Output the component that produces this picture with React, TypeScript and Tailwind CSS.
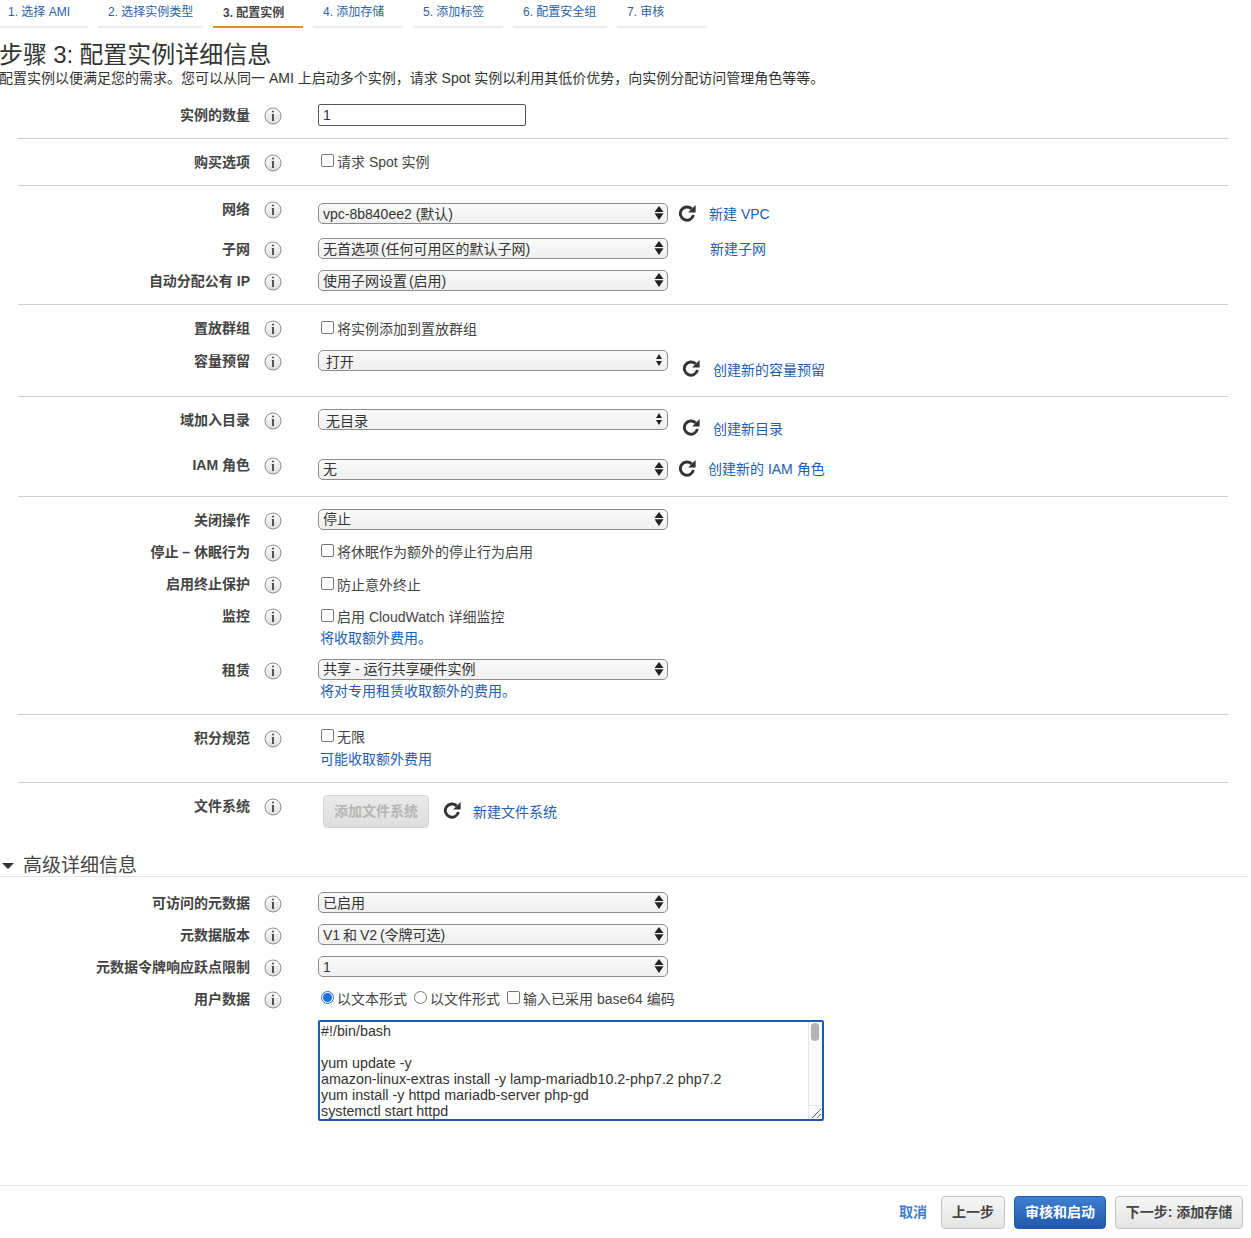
import React from "react";

const Info = () => (
  <svg width="18" height="18" viewBox="0 0 18 18" className="block">
    <defs>
      <linearGradient id="ig" x1="0" y1="0" x2="0" y2="1">
        <stop offset="0" stopColor="#ffffff" />
        <stop offset="1" stopColor="#dcdcdc" />
      </linearGradient>
    </defs>
    <circle cx="9" cy="9" r="8" fill="url(#ig)" stroke="#8f8f8f" strokeWidth="1" />
    <rect x="8" y="3.6" width="2" height="2" rx="1" fill="#444" />
    <path d="M7.8 7h2.1v7H8.1V8h-.3z" fill="#444" />
  </svg>
);

const Arrows = ({ cls = "", narrow = false }: { cls?: string; narrow?: boolean }) => (
  <svg width="10" height="14" viewBox="0 0 10 14" className={`block shrink-0 ${cls}`}>
    {narrow ? (
      <>
        <path d="M5 1L8 6H2z" fill="#222" />
        <path d="M5 13L8 8H2z" fill="#222" />
      </>
    ) : (
      <>
        <path d="M5 0L9.5 6H.5z" fill="#222" />
        <path d="M5 14L9.5 7.2H.5z" fill="#222" />
      </>
    )}
  </svg>
);

const Select = ({ text, tc = "pl-[4px] pt-px", narrow = false }: { text: string; tc?: string; narrow?: boolean }) => (
  <div className="flex h-[21px] w-[350px] items-center justify-between rounded-[5px] border border-[#8c8c8c] bg-gradient-to-b from-[#fafafa] to-[#f0f0f0] pr-[3px] text-[14px] leading-[21px] text-[#333]">
    <span className={tc}>{text}</span>
    <Arrows cls="mb-[2px]" narrow={narrow} />
  </div>
);

const Check = ({ children }: { children: React.ReactNode }) => (
  <div className="flex items-center text-[14px] leading-[20px] text-[#444]">
    <span className="mb-[3px] ml-[3px] mr-[3px] block h-[13px] w-[13px] rounded-[2px] border border-[#767676] bg-white" />
    {children}
  </div>
);

const A = ({ children, cls = "" }: { children: React.ReactNode; cls?: string }) => (
  <span className={`text-[14px] leading-[20px] text-[#2360b0] ${cls}`}>{children}</span>
);

const Row = ({
  label, h, lab, ico, ctl, children,
}: { label: string; h: string; lab: string; ico: string; ctl: string; children?: React.ReactNode }) => (
  <div className={`flex items-start ${h}`}>
    <div className={`w-[250px] shrink-0 text-right text-[14px] font-bold leading-[20px] text-[#444] ${lab}`}>{label}</div>
    <div className={`ml-[14px] w-[54px] shrink-0 ${ico}`}><Info /></div>
    <div className={`min-w-0 flex-1 ${ctl}`}>{children}</div>
  </div>
);

const Hr = () => <div className="ml-[18px] mr-[20px] h-px bg-[#cfcfcf]" />;

const Tab = ({ text, w, on, mr = "mr-[10px]", pl = "pl-[10px]" }: { text: string; w: string; on?: boolean; mr?: string; pl?: string }) => (
  <div className={`h-[28px] border-b-[2px] ${w} ${mr} ${pl} text-[12px] ${on ? "border-[#e8892b] font-bold leading-[26px] text-[#444]" : "border-[#ebebeb] leading-[25px] text-[#2a62a8]"}`}>
    {text}
  </div>
);

const Refresh = ({ cls }: { cls: string }) => (
  <svg width="18" height="18" viewBox="0 0 18 18" className={`shrink-0 ${cls}`}>
    <path d="M13.6 4.9A6.6 6.6 0 1 0 15.4 11" stroke="#333" strokeWidth="2.9" fill="none" />
    <path d="M17.6 1v7.4h-7.4z" fill="#333" />
  </svg>
);

const Btn = ({ children, cls }: { children: React.ReactNode; cls: string }) => (
  <div className={`flex h-[33px] items-center justify-center rounded-[4px] border text-[14px] font-bold ${cls}`}>{children}</div>
);

export default function App() {
  return (
    <div className="h-[1238px] w-[1248px] overflow-hidden bg-white font-['Liberation_Sans','Noto_Sans_CJK_SC',sans-serif]">
      <div className="flex">
        <Tab text="1. 选择 AMI" w="w-[88px]" pl="pl-[8px]" />
        <Tab text="2. 选择实例类型" w="w-[105px]" />
        <Tab text="3. 配置实例" w="w-[90px]" on />
        <Tab text="4. 添加存储" w="w-[90px]" />
        <Tab text="5. 添加标签" w="w-[90px]" />
        <Tab text="6. 配置安全组" w="w-[94px]" />
        <Tab text="7. 审核" w="w-[90px]" />
      </div>
      <h1 className="-ml-px mt-[11px] h-[31px] text-[24px] font-normal leading-[32px] text-[#333] [word-spacing:-0.5px]">步骤 3: 配置实例详细信息</h1>
      <p className="-ml-px h-[22px] text-[14px] leading-[16px] text-[#333]">配置实例以便满足您的需求。您可以从同一 AMI 上启动多个实例，请求 Spot 实例以利用其低价优势，向实例分配访问管理角色等等。</p>

      <Row label="实例的数量" h="h-[46px]" lab="mt-[13px]" ico="mt-[15px]" ctl="mt-[12px]">
        <div className="h-[22px] w-[208px] rounded-[2px] border border-[#555] pl-[4px] text-[14px] leading-[20px] text-[#333]">1</div>
      </Row>
      <Hr />
      <Row label="购买选项" h="h-[46px]" lab="mt-[13px]" ico="mt-[15px]" ctl="mt-[13px]">
        <Check>请求 Spot 实例</Check>
      </Row>
      <Hr />
      <Row label="网络" h="h-[45px]" lab="mt-[13px]" ico="mt-[15px]" ctl="mt-[17px]">
        <div className="flex items-start">
          <Select text="vpc-8b840ee2 (默认)" />
          <Refresh cls="ml-[10px] mt-px" />
          <A cls="ml-[13px] mt-px">新建 VPC</A>
        </div>
      </Row>
      <Row label="子网" h="h-[32px]" lab="mt-[8px]" ico="mt-[10px]" ctl="mt-[7px]">
        <div className="flex items-start">
          <Select text="无首选项 (任何可用区的默认子网)" tc="pl-[4px] pt-px [word-spacing:-2px]" />
          <A cls="ml-[42px] mt-px">新建子网</A>
        </div>
      </Row>
      <Row label="自动分配公有 IP" h="h-[41px]" lab="mt-[8px]" ico="mt-[10px]" ctl="mt-[7px]">
        <Select text="使用子网设置 (启用)" tc="pl-[4px] pt-px [word-spacing:-2px]" />
      </Row>
      <Hr />
      <Row label="置放群组" h="h-[34px]" lab="mt-[13px]" ico="mt-[15px]" ctl="mt-[14px]">
        <Check>将实例添加到置放群组</Check>
      </Row>
      <Row label="容量预留" h="h-[57px]" lab="mt-[12px]" ico="mt-[14px]" ctl="mt-[11px]">
        <div className="flex items-start">
          <Select text="打开" tc="pl-[7px] pt-[3px]" narrow />
          <Refresh cls="ml-[14px] mt-[9px]" />
          <A cls="ml-[13px] mt-[10px]">创建新的容量预留</A>
        </div>
      </Row>
      <Hr />
      <Row label="域加入目录" h="h-[50px]" lab="mt-[13px]" ico="mt-[15px]" ctl="mt-[12px]">
        <div className="flex items-start">
          <Select text="无目录" tc="pl-[7px] pt-[3px]" narrow />
          <Refresh cls="ml-[14px] mt-[9px]" />
          <A cls="ml-[13px] mt-[10px]">创建新目录</A>
        </div>
      </Row>
      <Row label="IAM 角色" h="h-[49px]" lab="mt-[8px]" ico="mt-[10px]" ctl="mt-[12px]">
        <div className="flex items-start">
          <Select text="无" tc="pl-[4px]" />
          <Refresh cls="ml-[10px]" />
          <A cls="ml-[12px]">创建新的 IAM 角色</A>
        </div>
      </Row>
      <Hr />
      <Row label="关闭操作" h="h-[35px]" lab="mt-[13px]" ico="mt-[15px]" ctl="mt-[12px]">
        <Select text="停止" tc="pl-[4px]" />
      </Row>
      <Row label="停止 – 休眠行为" h="h-[32px]" lab="mt-[10px]" ico="mt-[12px]" ctl="mt-[10px]">
        <Check>将休眠作为额外的停止行为启用</Check>
      </Row>
      <Row label="启用终止保护" h="h-[32px]" lab="mt-[10px]" ico="mt-[12px]" ctl="mt-[11px]">
        <Check>防止意外终止</Check>
      </Row>
      <Row label="监控" h="h-[52px]" lab="mt-[10px]" ico="mt-[12px]" ctl="mt-[11px]">
        <Check>启用 CloudWatch 详细监控</Check>
        <div className="ml-[2px] mt-px"><A cls="block">将收取额外费用。</A></div>
      </Row>
      <Row label="租赁" h="h-[66px]" lab="mt-[12px]" ico="mt-[14px]" ctl="mt-[11px]">
        <Select text="共享 - 运行共享硬件实例" tc="pl-[4px]" />
        <div className="ml-[2px] mt-px"><A cls="block">将对专用租赁收取额外的费用。</A></div>
      </Row>
      <Hr />
      <Row label="积分规范" h="h-[67px]" lab="mt-[13px]" ico="mt-[15px]" ctl="mt-[12px]">
        <Check>无限</Check>
        <div className="ml-[2px] mt-[2px]"><A cls="block">可能收取额外费用</A></div>
      </Row>
      <Hr />
      <Row label="文件系统" h="h-[67px]" lab="mt-[13px]" ico="mt-[15px]" ctl="mt-[12px]">
        <div className="flex items-start">
          <Btn cls="ml-[5px] w-[106px] border-[#d5d5d5] bg-gradient-to-b from-[#eaeaea] to-[#dedede] text-[#b5b5b5]">添加文件系统</Btn>
          <Refresh cls="ml-[14px] mt-[6px]" />
          <A cls="ml-[12px] mt-[7px]">新建文件系统</A>
        </div>
      </Row>
      <div className="flex h-[27px] items-center border-b border-[#e6e6e6] pt-[5px]">
        <svg width="12" height="6" viewBox="0 0 12 6" className="ml-[2px]"><path d="M0 0h12L6 6z" fill="#333" /></svg>
        <span className="ml-[9px] text-[19px] leading-[21px] text-[#444]">高级详细信息</span>
      </div>
      <Row label="可访问的元数据" h="h-[39px]" lab="mt-[16px]" ico="mt-[18px]" ctl="mt-[15px]">
        <Select text="已启用" />
      </Row>
      <Row label="元数据版本" h="h-[32px]" lab="mt-[9px]" ico="mt-[11px]" ctl="mt-[8px]">
        <Select text="V1 和 V2 (令牌可选)" tc="pl-[4px] pt-px [word-spacing:-1px]" />
      </Row>
      <Row label="元数据令牌响应跃点限制" h="h-[32px]" lab="mt-[9px]" ico="mt-[11px]" ctl="mt-[8px]">
        <Select text="1" />
      </Row>
      <Row label="用户数据" h="h-[205px]" lab="mt-[9px]" ico="mt-[11px]" ctl="mt-[9px]">
        <div className="flex items-center text-[14px] leading-[20px] text-[#444]">
          <span className="mb-[3px] ml-[3px] mr-[3px] flex h-[13px] w-[13px] items-center justify-center rounded-full border border-[#1f6fe0] bg-white">
            <span className="block h-[9px] w-[9px] rounded-full bg-[#1f6fe0]" />
          </span>
          以文本形式
          <span className="mb-[3px] ml-[7px] mr-[3px] block h-[13px] w-[13px] rounded-full border border-[#767676] bg-white" />
          以文件形式
          <span className="mb-[3px] ml-[7px] mr-[3px] block h-[13px] w-[13px] rounded-[2px] border border-[#767676] bg-white" />
          输入已采用 base64 编码
        </div>
        <div className="mt-[11px] flex h-[101px] w-[506px] overflow-hidden rounded-[2px] border-2 border-[#1c5ab5] bg-white">
          <div className="flex-1 pl-px pt-px text-[14.3px] leading-[16px] text-[#333]">
            <div>#!/bin/bash</div>
            <div className="h-[16px]" />
            <div>yum update -y</div>
            <div>amazon-linux-extras install -y lamp-mariadb10.2-php7.2 php7.2</div>
            <div>yum install -y httpd mariadb-server php-gd</div>
            <div>systemctl start httpd</div>
          </div>
          <div className="flex w-[14px] flex-col justify-between border-l border-[#e6e6e6] bg-[#fafafa]">
            <div className="ml-[2px] mt-px h-[18px] w-[8px] rounded-[4px] bg-[#b5b5b5]" />
            <div className="h-[14px] border-t border-[#e6e6e6]">
              <svg width="13" height="13" viewBox="0 0 13 13" className="block">
                <path d="M12 3L3 12M12 8L8 12" stroke="#666" strokeWidth="1" fill="none" />
              </svg>
            </div>
          </div>
        </div>
      </Row>
      <div className="flex h-[53px] items-start justify-end border-t border-[#e8e8e8] pr-[5px] pt-[10px]">
        <span className="mr-[14px] text-[14px] font-bold leading-[33px] text-[#3a7ed0]">取消</span>
        <Btn cls="mr-[9px] w-[64px] border-[#c4c4c4] bg-gradient-to-b from-[#f6f6f6] to-[#e4e4e4] text-[#444]">上一步</Btn>
        <Btn cls="mr-[9px] w-[92px] border-[#1f5bab] bg-gradient-to-b from-[#3f7fd2] to-[#2258aa] text-white">审核和启动</Btn>
        <Btn cls="w-[128px] border-[#c4c4c4] bg-gradient-to-b from-[#f6f6f6] to-[#e4e4e4] text-[#444]">下一步: 添加存储</Btn>
      </div>
    </div>
  );
}
